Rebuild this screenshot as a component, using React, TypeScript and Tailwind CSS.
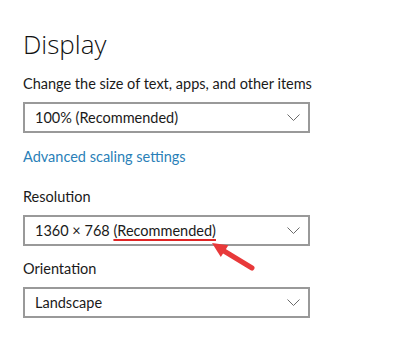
const font = { fontFamily: 'Lato, "Open Sans", sans-serif' };

function Chevron() {
  return (
    <svg width="13" height="7" viewBox="0 0 13 7" className="shrink-0">
      <polyline points="0.5,0.5 6.5,6.5 12.5,0.5" fill="none" stroke="#6b6b6b" strokeWidth="1" />
    </svg>
  );
}

function Select({ children, className = '' }: { children: React.ReactNode; className?: string }) {
  return (
    <div className={`w-[287px] h-[31px] border-2 border-[#999999] flex items-center justify-between pl-[10px] pr-[8px] text-[14.5px] text-[#1a1a1a] ${className}`}>
      <span>{children}</span>
      <Chevron />
    </div>
  );
}

export default function App() {
  return (
    <div className="relative w-[400px] h-[338px] bg-white overflow-hidden" style={font}>
      <div className="pl-[23px] pt-[28px] flex flex-col items-start">
        <h1 className="text-[26px] leading-[32px] font-light text-[#111]" style={{ fontFamily: '"Open Sans", sans-serif' }}>Display</h1>
        <p className="mt-[14px] text-[14.5px] leading-[20px] text-[#1a1a1a]">Change the size of text, apps, and other items</p>
        <Select className="mt-[8px]">100% (Recommended)</Select>
        <a className="mt-[14px] text-[14.5px] leading-[20px] text-[#2a7fb8]">Advanced scaling settings</a>
        <p className="mt-[20px] text-[14.5px] leading-[20px] text-[#1a1a1a]">Resolution</p>
        <Select className="mt-[8px]">
          1360 × 768{' '}
          <span className="underline decoration-[#e02424] decoration-2 underline-offset-[3px]">(Recommended)</span>
        </Select>
        <p className="mt-[13px] text-[14.5px] leading-[20px] text-[#1a1a1a]">Orientation</p>
        <Select className="mt-[8px]">Landscape</Select>
      </div>
      <svg className="absolute left-0 top-0" width="400" height="338" viewBox="0 0 400 338">
        <line x1="224" y1="251" x2="252" y2="268" stroke="#e8393a" strokeWidth="5" strokeLinecap="round" />
        <polygon points="212,243 228.4,245.3 220.8,257.1" fill="#e8393a" />
      </svg>
    </div>
  );
}
